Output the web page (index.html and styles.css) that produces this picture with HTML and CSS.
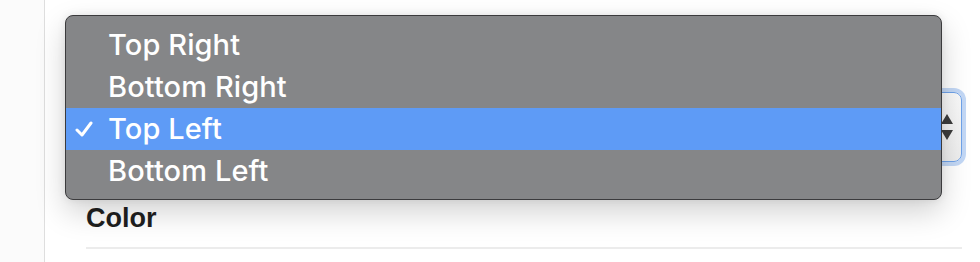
FILE: index.html
```html
<!DOCTYPE html>
<html>
<head>
<meta charset="utf-8">
<link rel="stylesheet" href="styles.css">
</head>
<body>
<div class="page">
  <div class="panel">
    <div class="row">
      <div class="select">
        <svg class="arrows" width="12" height="26" viewBox="0 0 12 26">
          <path d="M6 0 L12 10 L0 10 Z" fill="#3d3d3d"/>
          <path d="M0 16 L12 16 L6 26 Z" fill="#3d3d3d"/>
        </svg>
      </div>
    </div>
    <h3 class="heading">Color</h3>
    <div class="divider"></div>
  </div>
</div>
<div class="menu">
  <div class="item">Top Right</div>
  <div class="item">Bottom Right</div>
  <div class="item selected">
    <svg class="check" width="18" height="16" viewBox="0 0 18 16">
      <path d="M2 9 L7 14 L16 2" fill="none" stroke="#ffffff" stroke-width="3" stroke-linecap="round" stroke-linejoin="round"/>
    </svg>Top Left</div>
  <div class="item">Bottom Left</div>
</div>
</body>
</html>
```

FILE: styles.css
```css
html, body {
  margin: 0;
  padding: 0;
  background: #ffffff;
  width: 980px;
  height: 262px;
  overflow: hidden;
  font-family: Inter, "Liberation Sans", sans-serif;
}
.page {
  height: 262px;
  padding-left: 44px;
  background: #fbfbfb;
}
.panel {
  height: 262px;
  background: #ffffff;
  border-left: 1px solid #dedede;
  padding-left: 41px;
  padding-right: 18px;
  box-sizing: border-box;
}
.row {
  padding-top: 92px;
}
.select {
  height: 70px;
  border: 1px solid #6fa3ea;
  border-radius: 8px;
  box-shadow: 0 0 0 4px #c3d8f6;
  background: linear-gradient(#fafafa, #eeeeee);
  display: flex;
  align-items: center;
  justify-content: flex-end;
  padding: 0 8px 0 20px;
  box-sizing: border-box;
}
.arrows {
  display: block;
}
.heading {
  margin: 0;
  padding-top: 40px;
  font-family: "Liberation Sans", Arial, sans-serif;
  font-weight: bold;
  font-size: 27px;
  line-height: 32px;
  color: #1f1f1f;
}
.divider {
  margin-top: 13px;
  height: 2px;
  background: #ececec;
}
.menu {
  position: absolute;
  left: 65px;
  top: 15px;
  width: 877px;
  height: 185px;
  box-sizing: border-box;
  padding: 8px 0;
  background: #858688;
  border: 1px solid #3b3b3d;
  border-radius: 8px;
  box-shadow: 0 12px 30px rgba(0,0,0,0.18), 0 0 8px rgba(0,0,0,0.08);
}
.item {
  position: relative;
  height: 42px;
  line-height: 42px;
  padding-left: 42px;
  font-size: 29px;
  font-weight: 500;
  letter-spacing: 0.1px;
  color: #ffffff;
}
.item.selected {
  background: #5e9bf6;
}
.check {
  position: absolute;
  left: 9px;
  top: 13px;
}
```
